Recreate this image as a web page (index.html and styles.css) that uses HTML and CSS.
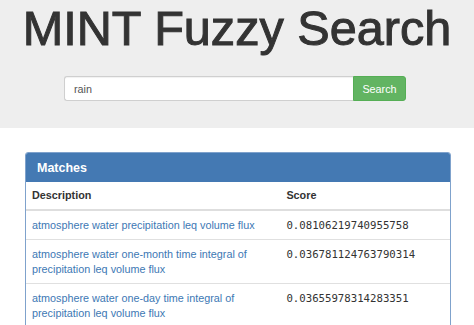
FILE: index.html
```html
<!DOCTYPE html>
<html>
<head>
<meta charset="utf-8">
<link rel="stylesheet" href="styles.css">
</head>
<body>
<div class="jumbotron">
  <h1 class="title">MINT Fuzzy Search</h1>
  <form class="search">
    <input class="search-input" type="text" value="rain">
    <button class="search-btn" type="button">Search</button>
  </form>
</div>
<div class="content">
  <div class="panel">
    <div class="panel-heading">Matches</div>
    <table class="results">
      <thead>
        <tr><th class="col-desc">Description</th><th>Score</th></tr>
      </thead>
      <tbody>
        <tr><td><a href="#">atmosphere water precipitation leq volume flux</a></td><td class="score">0.08106219740955758</td></tr>
        <tr><td><a href="#">atmosphere water one-month time integral of precipitation leq volume flux</a></td><td class="score">0.036781124763790314</td></tr>
        <tr><td><a href="#">atmosphere water one-day time integral of precipitation leq volume flux</a></td><td class="score">0.03655978314283351</td></tr>
      </tbody>
    </table>
  </div>
</div>
</body>
</html>
```
FILE: styles.css
```css
html, body {
  margin: 0;
  padding: 0;
  background: #fff;
  font-family: "Liberation Sans", Arial, sans-serif;
  font-size: 10.8px;
  line-height: 15px;
  color: #333;
  overflow: hidden;
}
.jumbotron {
  background: #eeeeee;
  height: 128px;
  box-sizing: border-box;
  padding-top: 2px;
}
.title {
  margin: 0;
  text-align: center;
  font-size: 48.6px;
  line-height: 1.1;
  font-weight: normal;
  color: #333;
  -webkit-text-stroke: 1px #333;
}
.search {
  display: flex;
  margin: 21px 0 0 64px;
  width: 342px;
  height: 25px;
}
.search-input {
  flex: 1;
  min-width: 0;
  box-sizing: border-box;
  height: 25px;
  margin: 0;
  padding: 0 9px;
  border: 1px solid #cfcfcf;
  border-right: none;
  border-radius: 3px 0 0 3px;
  font-family: "Liberation Sans", Arial, sans-serif;
  font-size: 10.8px;
  color: #555;
  background: #fff;
  outline: none;
  box-shadow: inset 0 1px 1px rgba(0,0,0,0.06);
}
.search-btn {
  width: 53px;
  height: 25px;
  margin: 0;
  padding: 0;
  box-sizing: border-box;
  border: 1px solid #55ae55;
  border-radius: 0 3px 3px 0;
  background: #62b462;
  color: #fff;
  font-family: "Liberation Sans", Arial, sans-serif;
  font-size: 10.8px;
}
.content {
  padding: 24px 23px 0 25px;
}
.panel {
  border: 1px solid #7fa2cc;
  border-radius: 3px;
  background: #fff;
}
.panel-heading {
  background: #4479b3;
  color: #fff;
  font-weight: bold;
  font-size: 12.5px;
  line-height: 14px;
  padding: 7.5px 11px;
  border-radius: 2px 2px 0 0;
}
.results {
  width: 100%;
  border-collapse: collapse;
}
.results th {
  text-align: left;
  font-weight: bold;
  padding: 6px 6px 6px;
  border-bottom: 2px solid #dedede;
}
.results .col-desc {
  width: 60%;
}
.results td {
  padding: 6.5px 6px 6.5px;
  vertical-align: top;
  border-top: 1px solid #e0e0e0;
}
.results a {
  color: #3d78b4;
  text-decoration: none;
}
.results .score {
  font-family: "DejaVu Sans Mono", "Liberation Mono", monospace;
  font-size: 10.7px;
  color: #333;
}
```
